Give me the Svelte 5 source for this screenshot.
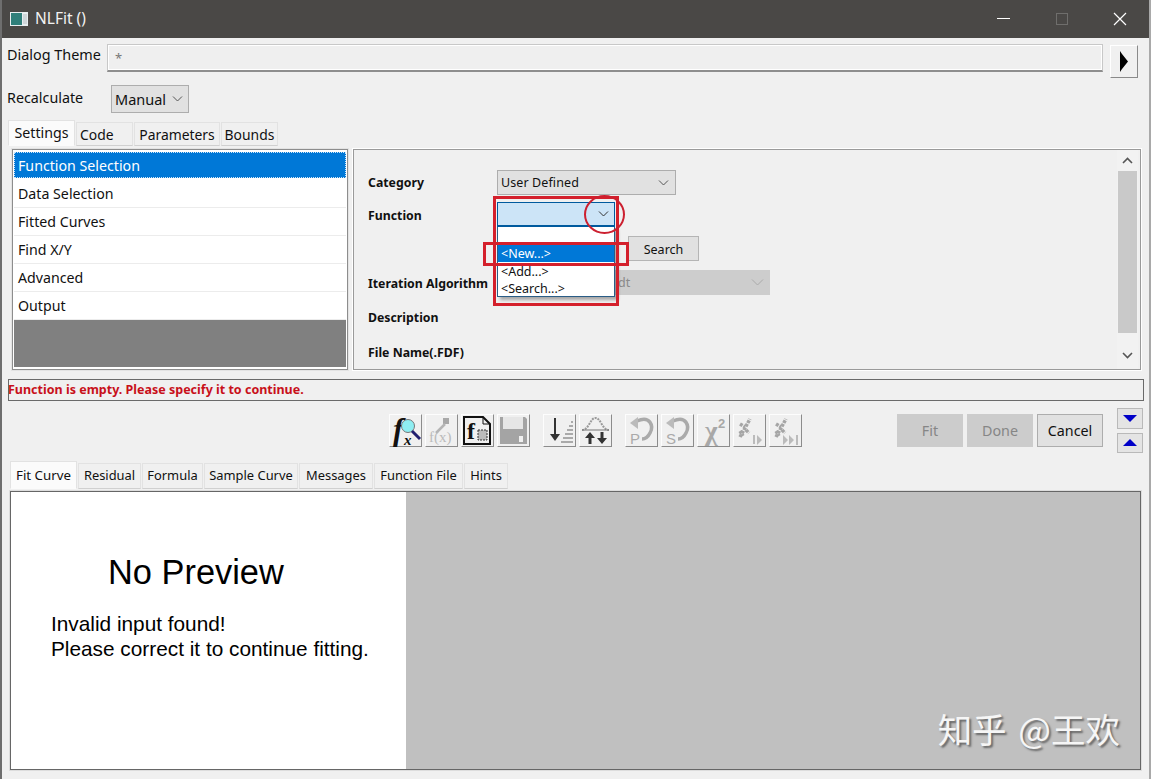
<script>
  const tabs1 = [['Settings',67,true,false],['Code',57,false,true],['Parameters',86,false,false],['Bounds',57,false,false]];
  const items = ['Function Selection','Data Selection','Fitted Curves','Find X/Y','Advanced','Output'];
  const tabs2 = [['Fit Curve',67,true],['Residual',63],['Formula',61],['Sample Curve',94],['Messages',74],['Function File',89],['Hints',44]];
</script>

<div class="win">
  <header class="title">
    <svg class="appicon" width="18" height="14" viewBox="0 0 18 14"><rect x="0" y="0" width="18" height="14" fill="#e8eef0"/><rect x="1" y="1" width="11" height="12" fill="#2f7f7a"/><rect x="13" y="2" width="4" height="10" fill="#cfd6d9"/></svg>
    <span class="ttext">NLFit ()</span>
    <div class="wbtns">
      <svg width="13" height="14" viewBox="0 0 13 14"><path d="M0 6.500H13" stroke="#fff" stroke-width="1"/></svg>
      <svg width="13" height="14" viewBox="0 0 13 14"><rect x="1.500" y="1.500" width="11" height="11" fill="none" stroke="#6f6e6c"/></svg>
      <svg width="14" height="14" viewBox="0 0 14 14"><path d="M1 1L13 13M13 1L1 13" stroke="#fff" stroke-width="1.200"/></svg>
    </div>
  </header>

  <div class="themerow">
    <span class="tlabel">Dialog Theme</span>
    <div class="themebox">*</div>
    <button class="arrowbtn"><svg width="8" height="21" viewBox="0 0 8 21"><path d="M0 0L2 3L8 10.500L2 18L0 21Z" fill="#000"/></svg></button>
  </div>

  <div class="recalc">
    <span class="rlabel">Recalculate</span>
    <div class="combo manual"><span>Manual</span><svg class="chev" width="11" height="6" viewBox="0 0 11 6"><path d="M1 0.500L5.500 5L10 0.500" fill="none" stroke="#555"/></svg></div>
  </div>

  <nav class="tabs top">
    {#each tabs1 as t}
      <div class="tab" class:active={t[2]} class:left={t[3]} style="width:{t[1]}px">{t[0]}</div>
    {/each}
  </nav>

  <section class="settings">
    <div class="list">
      {#each items as it, i}
        <div class="item" class:sel={i === 0}>{it}</div>
      {/each}
      <div class="listfill"></div>
    </div>
    <div class="form">
      <div class="grid">
        <b>Category</b>
        <div class="combo cat"><span>User Defined</span><svg class="chev" width="11" height="6" viewBox="0 0 11 6"><path d="M1 0.500L5.500 5L10 0.500" fill="none" stroke="#555"/></svg></div>
        <b>Function</b>
        <div class="anchor">
          <div class="fcombo"><svg width="11" height="6" viewBox="0 0 11 6"><path d="M1 0.500L5.500 5L10 0.500" fill="none" stroke="#333"/></svg></div>
          <div class="popup">
            <div class="opt"></div>
            <div class="opt hi">&lt;New...&gt;</div>
            <div class="opt">&lt;Add...&gt;</div>
            <div class="opt">&lt;Search...&gt;</div>
          </div>
        </div>
        <span></span>
        <div class="searchwrap"><button class="search">Search</button></div>
        <b>Iteration Algorithm</b>
        <div class="combo iter"><span class="itxt">dt</span><svg class="chev" width="13" height="7" viewBox="0 0 13 7"><path d="M1 0.500L6.500 6L12 0.500" fill="none" stroke="#aaa"/></svg></div>
        <b>Description</b><span></span>
        <b>File Name(.FDF)</b><span></span>
      </div>
      <div class="sbar">
        <svg width="11" height="7" viewBox="0 0 11 7"><path d="M1 6L5.500 1.500L10 6" fill="none" stroke="#555" stroke-width="1.600"/></svg>
        <div class="thumb"></div>
        <svg width="11" height="7" viewBox="0 0 11 7"><path d="M1 1L5.500 5.500L10 1" fill="none" stroke="#555" stroke-width="1.600"/></svg>
      </div>
    </div>
  </section>

  <div class="status">Function is empty. Please specify it to continue.</div>

  <div class="toolbar">
    <div class="tools">
      <button class="tb"><svg viewBox="0 0 31 31"><text x="3" y="25" class="ff">f</text><text x="14" y="30" class="xx">x</text><circle cx="18" cy="11" r="6.500" fill="#8eeef2" stroke="#777"/><path d="M22 16L30 24" stroke="#202070" stroke-width="3"/></svg></button>
      <button class="tb"><svg viewBox="0 0 31 31"><rect x="17" y="3" width="6" height="6" fill="#a8a8a8"/><path d="M19 9L10 18" stroke="#b5b5b5" stroke-width="2.500"/><text x="3" y="27" class="gr">f(x)</text></svg></button>
      <button class="tb"><svg viewBox="0 0 31 31"><path d="M2 2H21L28 9V29H2Z" fill="none" stroke="#111" stroke-width="2"/><path d="M21 2V9H28" fill="none" stroke="#111"/><text x="5" y="24" class="f2">f</text><rect x="16" y="15" width="9" height="10" fill="#bbb" stroke="#333" stroke-dasharray="2 1"/></svg></button>
      <button class="tb"><svg viewBox="0 0 31 31"><path d="M2 2H27L29 4V29H2Z" fill="#a4a4a4"/><rect x="5" y="2" width="20" height="12" fill="#e6e6e6"/><rect x="21" y="21" width="4" height="6" fill="#f0f0f0"/></svg></button>
      <span class="sp"></span>
      <button class="tb"><svg viewBox="0 0 31 31"><path d="M11 3V23" stroke="#333" stroke-width="2"/><path d="M6 19L11 26L16 19Z" fill="#333"/><path d="M17 27H29M19 23H29M21 19H29M23 15H29M25 11H29M27 7H29" stroke="#aaa" stroke-width="2"/></svg></button>
      <button class="tb"><svg viewBox="0 0 31 31"><path d="M2 15C9 15 10 3 15.500 3S22 15 29 15" fill="none" stroke="#999" stroke-width="2" stroke-dasharray="2 1"/><path d="M2 15H29" stroke="#777"/><path d="M10 17L5 23H8.500V29H11.500V23H15Z" fill="#333"/><path d="M22 29L17 23H20.500V17H23.500V23H27Z" fill="#333"/></svg></button>
      <span class="sp"></span>
      <button class="tb"><svg viewBox="0 0 31 31"><path d="M11 6C24 0 28 11 24 18C22 22 19 24 16 24" fill="none" stroke="#aaa" stroke-width="3.500"/><path d="M4 8L12 2V14Z" fill="#bbb"/><text x="4" y="29" class="ltr">P</text></svg></button>
      <button class="tb"><svg viewBox="0 0 31 31"><path d="M11 6C24 0 28 11 24 18C22 22 19 24 16 24" fill="none" stroke="#aaa" stroke-width="3.500"/><path d="M4 8L12 2V14Z" fill="#bbb"/><text x="4" y="29" class="ltr">S</text></svg></button>
      <button class="tb"><svg viewBox="0 0 31 31"><text x="7" y="25" class="chi">χ</text><text x="20" y="13" class="sq">2</text></svg></button>
      <button class="tb"><svg viewBox="0 0 31 31"><path d="M6 22L16 4M6 9L11 12M12 15L15 18M6 16L9 21" stroke="#a5a5a5" stroke-width="3.500" stroke-dasharray="3 1"/><path d="M20 20V29" stroke="#bbb" stroke-width="2"/><path d="M23 20L28 25L23 30Z" fill="#bbb"/></svg></button>
      <button class="tb"><svg viewBox="0 0 31 31"><path d="M6 22L16 4M6 9L11 12M12 15L15 18M6 16L9 21" stroke="#a5a5a5" stroke-width="3.500" stroke-dasharray="3 1"/><path d="M13 20L18 25L13 30ZM19 20L24 25L19 30Z" fill="#bbb"/><path d="M27 20V30" stroke="#bbb" stroke-width="2"/></svg></button>
    </div>
    <div class="actions">
      <button class="act dis">Fit</button>
      <button class="act dis">Done</button>
      <button class="act">Cancel</button>
    </div>
    <div class="updown">
      <button class="ud"><svg width="14" height="7" viewBox="0 0 14 7"><path d="M0 0H14L7 7Z" fill="#0000c8"/></svg></button>
      <button class="ud"><svg width="14" height="7" viewBox="0 0 14 7"><path d="M0 7H14L7 0Z" fill="#0000c8"/></svg></button>
    </div>
  </div>

  <nav class="tabs bottom">
    {#each tabs2 as t}
      <div class="tab" class:active={t[2]} style="width:{t[1]}px">{t[0]}</div>
    {/each}
  </nav>

  <section class="preview">
    <div class="white">
      <div class="nop">No Preview</div>
      <div class="inv">Invalid input found!<br>Please correct it to continue fitting.</div>
    </div>
    <div class="gray"><span class="wm">知乎 @王欢</span></div>
  </section>

  <div class="rect r1"></div>
  <div class="rect r2"></div>
  <div class="circ"></div>
</div>

<style>
  :global(body) { margin: 0; background: #f0f0f0; }
  .win {
    position: relative; width: 1151px; height: 779px; overflow: hidden; box-sizing: border-box;
    background: #f0f0f0; color: #111; font-family: "Noto Sans", "Open Sans", sans-serif; font-size: 14px;
    border-left: 2px solid #6e6e6e; border-right: 2px solid #a9a9a9;
    display: flex; flex-direction: column;
  }
  button { font-family: inherit; padding: 0; margin: 0; }
  .title {
    height: 38px; flex: none; background: #4a4846; color: #fff; display: flex; align-items: center;
    margin: 0 -2px; padding: 0 0 0 10px; box-sizing: border-box;
  }
  .appicon { margin-right: 7px; }
  .ttext { font-size: 15.500px; color: #f2f2f2; line-height: 36px; height: 38px; }
  .wbtns { margin-left: auto; display: flex; gap: 45px; padding-right: 24px; }
  .themerow { display: flex; height: 40px; flex: none; padding: 6px 0 0 5px; box-sizing: border-box; }
  .tlabel { width: 100px; line-height: 22px; font-size: 14.400px; white-space: nowrap; }
  .themebox {
    width: 996px; height: 28px; box-sizing: border-box; background: #efefef;
    border: 1px solid #c8c8c8; border-bottom: 2px solid #8e8e8e; box-shadow: inset 0 0 0 1px #fff;
    color: #777; font-size: 13px; padding: 4px 0 0 7px;
  }
  .arrowbtn {
    width: 28px; height: 33px; margin: 1px 0 0 7px; background: #f0f0f0; display: flex; align-items: center; justify-content: center;
    border: 1px solid; border-color: #fff #8a8a8a #8a8a8a #fff;
  }
  .recalc { display: flex; height: 42px; flex: none; padding-top: 7px; padding-left: 5px; box-sizing: border-box; }
  .rlabel { width: 104px; line-height: 26px; font-size: 14.300px; }
  .combo {
    box-sizing: border-box; background: #e1e1e1; border: 1px solid #adadad; display: flex; align-items: center; justify-content: space-between;
  }
  .manual { width: 78px; height: 28px; padding: 0 3px 0 3px; font-size: 14.500px; }
  .chev { margin-right: 2px; }
  .tabs { display: flex; flex: none; font-size: 14px; align-items: flex-end; }
  .tabs.top { height: 26px; padding-left: 6px; font-size: 13.900px; }
  .tab {
    box-sizing: border-box; height: 24px; background: #f0f0f0; border: 1px solid #e2e2e2; border-bottom: 1px solid #d0d0d0; margin-right: 1px;
    text-align: center; line-height: 23px; white-space: nowrap;
  }
  .tab.left { text-align: left; padding-left: 3px; }
  .tab.active { height: 26px; background: #fbfbfb; border-bottom-color: #fbfbfb; line-height: 23px; font-size: 14.200px; }
  .settings { display: flex; height: 225px; flex: none; padding: 3px 0 0 10px; box-sizing: border-box; gap: 5px; }
  .list {
    width: 336px; height: 221px; box-sizing: border-box; background: #fff; border: 1px solid #8d8d8d; padding: 2px 1px;
    display: flex; flex-direction: column; outline: 1px solid #e3e3e3;
  }
  .item { height: 28px; flex: none; box-sizing: border-box; padding-left: 4px; line-height: 27px; border-bottom: 1px solid #ececec; font-size: 14.200px; }
  .item.sel { height: 26px; margin-bottom: 2px; background: #0078d7; color: #fff; border: 1px dotted #cfe6f8; line-height: 26px; padding-left: 3px; }
  .listfill { flex: 1; background: #808080; }
  .form {
    width: 788px; height: 221px; box-sizing: border-box; border: 1px solid #9a9a9a; background: #f0f0f0; display: flex;
    outline: 1px solid #fff;
  }
  .grid {
    flex: 1; display: grid; grid-template-columns: 129px 1fr; grid-template-rows: 33px 33px 34px 34px 34px 36px;
    padding: 16px 0 0 14px; font-size: 12.500px; align-items: center; align-content: start;
  }
  .grid b { font-weight: 700; white-space: nowrap; font-size: 12.300px; }
  .cat { width: 179px; height: 25px; padding: 0 4px 0 3px; font-size: 12.500px; letter-spacing: 0.100px; }
  .iter { width: 273px; height: 25px; padding: 0 3px 0 120px; background: #cdcdcd; border-color: #cdcdcd; color: #8a8a8a; margin-top: -1px; }
  .itxt { font-size: 12.500px; }
  .anchor { position: relative; height: 25px; align-self: start; margin-top: 3px; }
  .fcombo {
    width: 118px; height: 25px; box-sizing: border-box; background: #cce4f7; border: 1px solid #005a9e; border-bottom: 2px solid #005a9e;
    display: flex; align-items: center; justify-content: flex-end; padding-right: 5px;
  }
  .popup {
    position: absolute; top: 25px; left: 0; width: 118px; box-sizing: border-box; background: #fff; border: 1px solid #2a5d86; border-top: 0;
    box-shadow: 3px 3px 3px rgba(0,0,0,0.3); z-index: 2; font-size: 12.500px;
  }
  .opt { height: 17px; line-height: 19px; padding-left: 3px; color: #111; }
  .opt.hi { background: #0078d7; color: #fff; height: 18px; line-height: 20px; }
  .searchwrap { padding-left: 131px; margin-bottom: 2px; }
  .search { width: 71px; height: 25px; display: block; background: #e1e1e1; border: 1px solid #b5b5b5; font-size: 12.500px; color: #111; padding-top: 2px; }
  .sbar { width: 21px; margin-right: 2px; display: flex; flex-direction: column; align-items: center; background: #f2f2f2; padding-top: 7px; box-sizing: border-box; }
  .thumb { width: 19px; height: 162px; background: #c9c9c9; flex: none; margin: 7px 0 19px; }
  .status {
    flex: none; margin: 8px 5px 0 6px; height: 22px; box-sizing: border-box; border: 1px solid #6a6a6a; color: #c8101a; font-weight: 700; font-size: 12.500px; line-height: 19px; text-indent: -1px;
  }
  .toolbar { flex: none; height: 60px; display: flex; position: relative; padding-top: 13px; box-sizing: border-box; }
  .tools { display: flex; gap: 3px; margin-left: 387px; height: 33px; width: 508px; }
  .tb { width: 33px; height: 33px; box-sizing: border-box; background: #f0f0f0; border: 1px solid; border-color: #fdfdfd #8c8c8c #8c8c8c #fdfdfd; display: block; }
  .tb svg { width: 31px; height: 31px; display: block; overflow: visible; }
  .sp { width: 7px; }
  .ff { font: italic 700 31px "Liberation Serif", serif; fill: #111; }
  .xx { font: italic 700 15px "Liberation Serif", serif; fill: #111; }
  .gr { font: 15px "Liberation Serif", serif; fill: #bbb; }
  .f2 { font: 700 24px "Liberation Serif", serif; fill: #111; }
  .ltr { font: 15px "Liberation Sans", sans-serif; fill: #aaa; }
  .chi { font: 700 27px "Liberation Serif", serif; fill: #a8a8a8; }
  .sq { font: 700 13px "Liberation Sans", sans-serif; fill: #a8a8a8; }
  .actions { display: flex; gap: 4px; height: 33px; }
  .act { width: 66px; height: 33px; background: #e1e1e1; border: 1px solid #adadad; font-size: 14.300px; color: #111; }
  .act.dis { background: #cccccc; border-color: #cccccc; color: #868686; }
  .updown { position: absolute; left: 1115px; top: 7px; display: flex; flex-direction: column; gap: 4px; }
  .ud { width: 26px; height: 20.500px; background: #e4e4e4; border: 1px solid #b9b9b9; display: flex; align-items: center; justify-content: center; }
  .tabs.bottom { height: 28px; padding-left: 8px; font-size: 12.900px; }
  .tabs.bottom .tab { height: 26px; line-height: 22px; }
  .tabs.bottom .tab.active { height: 28px; line-height: 27px; font-size: 13.300px; }
  .preview {
    flex: none; margin: 2px 8px 0 8px; height: 279px; display: flex; box-sizing: border-box; border: 1px solid #666; outline: 1px solid #ddd;
  }
  .white { width: 395px; background: #fff; flex: none; color: #000; font-family: "Liberation Sans", sans-serif; }
  .nop { font-size: 34.400px; padding: 60px 0 0 97px; line-height: 40px; white-space: nowrap; }
  .inv { font-size: 20.800px; line-height: 25px; padding: 19px 0 0 40px; white-space: nowrap; }
  .gray { flex: 1; background: #c0c0c0; display: flex; justify-content: flex-end; align-items: flex-end; padding: 0 20px 19px 0; }
  .wm { color: #f6f6f6; font: 400 34.500px "Noto Sans CJK SC", sans-serif; line-height: 44px; word-spacing: 4px; text-shadow: 2px 2px 2px #666; white-space: nowrap; }
  .rect { position: absolute; box-sizing: border-box; border: 3.500px solid #d4202c; z-index: 3; pointer-events: none; }
  .r1 { left: 491px; top: 196px; width: 126px; height: 110px; }
  .r2 { left: 481px; top: 242px; width: 146px; height: 24px; }
  .circ { position: absolute; z-index: 3; left: 582px; top: 195px; width: 41px; height: 39px; box-sizing: border-box; border: 2.500px solid #cc2030; border-radius: 50%; }
</style>
